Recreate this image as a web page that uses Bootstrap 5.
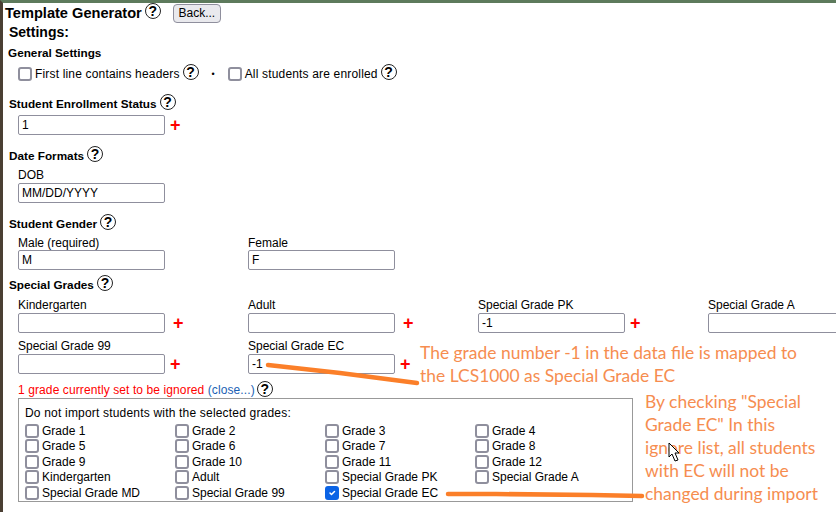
<!DOCTYPE html>
<html lang="en">
<head>
<meta charset="utf-8">
<title>Template Generator</title>
<link href="https://cdn.jsdelivr.net/npm/bootstrap@5.3.0/dist/css/bootstrap.min.css" rel="stylesheet">
<style>
html, body { height: 100%; }
body { margin: 0; background: #fff; color: #000; font-family: "Liberation Sans", Arial, sans-serif; font-size: 12px; line-height: 16px; overflow: hidden; }
.shot { position: relative; width: 836px; height: 512px; overflow: hidden; border-top: 3px solid #5d7a5c; border-left: 3px solid #4a3f33; }
.title-row { height: 20px; margin-left: 2px; }
.title-txt { font-size: 14.6px; font-weight: 700; }
.back-btn { width: 48px; height: 19px; margin-left: 12px; padding: 0; font-size: 12px; line-height: 16px; color: #000; background: #e9e9ed; border: 1px solid #8f8f9d; border-radius: 4px; font-family: "Liberation Sans", sans-serif; }
.set-head { margin: 1px 0 0 6px; height: 16px; font-size: 14px; font-weight: 700; }
.sec-head { height: 16px; margin-left: 6px; font-size: 11.75px; font-weight: 700; }
.sec-a { margin-top: 5px; margin-left: 5px; }
.sec-b { margin-top: 14px; }
.sec-c { margin-top: 13px; }
.sec-d { margin-top: 7px; }
.help { display: inline-flex; align-items: center; justify-content: center; width: 16px; height: 16px; margin: 0 0 4px 3px; border: 1px solid #222; border-radius: 50%; background: #fff; font-size: 14px; line-height: 1; font-weight: 700; flex: none; }
.chk-row { height: 16px; margin: 5px 0 0 15px; letter-spacing: .17px; }
.box13 { width: 14px; height: 14px; margin: 0 3px 0 0; border: 2px solid #8f8f9d; border-radius: 2px; flex: none; }
.box13:checked { background-color: #0b63e5; border-color: #0b63e5; }
.sep { width: 29px; text-align: center; font-size: 9px; }
.fld-rows { margin-left: 15px; }
.fld { width: 230px; flex: none; }
.fld-lab { height: 16px; padding-top: 1px; }
.fld-in { width: 147px; height: 20px; padding: 0 3px; font-size: 12px; line-height: 18px; color: #000; border: 1px solid #8f8f9d; border-radius: 2px; background: #fff; font-family: "Liberation Sans", sans-serif; min-height: 0; }
.req { width: 10px; margin-left: 5px; color: #f00; font-size: 18px; font-weight: 700; line-height: 20px; text-align: center; }
.req-w { margin-left: 8px; }
.gap-lab { margin-top: 3px; }
.top-gap2 { margin-top: 2px; }
.top-gap1 { margin-top: 1px; }
.row-gap4 { margin-top: 4px; }
.ign-line { height: 14px; margin: 9px 0 0 15px; letter-spacing: .1px; }
.ign-red { color: #f00; }
.ign-link { color: #1a5fb4; }
.ign-line .help { margin-top: 0; margin-bottom: 3px; margin-left: 2px; }
.ign-box { width: 615px; height: 104px; margin: 1px 0 0 15px; padding: 6px 0 0 6px; border: 1px solid #999; }
.ign-cap { height: 16px; margin-bottom: 2px; letter-spacing: .19px; }
.ign-grid { display: grid; grid-template-columns: repeat(4, 150px); grid-auto-rows: 15.5px; }
.ign-cell { display: flex; align-items: center; }
.note { position: absolute; color: #f68d50; font-family: Lato, "Open Sans", sans-serif; font-size: 17.45px; line-height: 23px; white-space: nowrap; }
.note-a { left: 417px; top: 338px; }
.note-b { left: 642px; top: 387px; }
.ink { position: absolute; left: -3px; top: -3px; pointer-events: none; }
</style>
</head>
<body>
<div class="shot">
  <div class="title-row d-flex align-items-center">
    <span class="title-txt">Template Generator</span><span class="help">?</span>
    <button type="button" class="back-btn">Back...</button>
  </div>
  <div class="set-head">Settings:</div>
  <div class="sec-head sec-a">General Settings</div>
  <div class="chk-row d-flex align-items-center">
    <input class="form-check-input box13 mt-0" type="checkbox"><span>First line contains headers</span><span class="help">?</span>
    <span class="sep">•</span>
    <input class="form-check-input box13 mt-0" type="checkbox"><span>All students are enrolled</span><span class="help">?</span>
  </div>
  <div class="sec-head sec-b d-flex align-items-center">Student Enrollment Status<span class="help">?</span></div>
  <div class="fld-rows d-flex gap-lab">
    <input class="fld-in form-control" type="text" value="1"><span class="req">+</span>
  </div>
  <div class="sec-head sec-c d-flex align-items-center">Date Formats<span class="help">?</span></div>
  <div class="fld-rows top-gap2">
    <div class="fld"><div class="fld-lab">DOB</div><input class="fld-in form-control top-gap1" type="text" value="MM/DD/YYYY"></div>
  </div>
  <div class="sec-head sec-c d-flex align-items-center">Student Gender<span class="help">?</span></div>
  <div class="fld-rows d-flex top-gap2">
    <div class="fld"><div class="fld-lab">Male (required)</div><input class="fld-in form-control" type="text" value="M"></div>
    <div class="fld"><div class="fld-lab">Female</div><input class="fld-in form-control" type="text" value="F"></div>
  </div>
  <div class="sec-head sec-d d-flex align-items-center">Special Grades<span class="help">?</span></div>
  <div class="fld-rows d-flex gap-lab flex-nowrap">
    <div class="fld"><div class="fld-lab">Kindergarten</div><div class="d-flex top-gap1"><input class="fld-in form-control" type="text"><span class="req req-w">+</span></div></div>
    <div class="fld"><div class="fld-lab">Adult</div><div class="d-flex top-gap1"><input class="fld-in form-control" type="text"><span class="req req-w">+</span></div></div>
    <div class="fld"><div class="fld-lab">Special Grade PK</div><div class="d-flex top-gap1"><input class="fld-in form-control" type="text" value="-1"><span class="req">+</span></div></div>
    <div class="fld"><div class="fld-lab">Special Grade A</div><div class="d-flex top-gap1"><input class="fld-in form-control" type="text"></div></div>
  </div>
  <div class="fld-rows d-flex row-gap4">
    <div class="fld"><div class="fld-lab">Special Grade 99</div><div class="d-flex top-gap1"><input class="fld-in form-control" type="text"><span class="req">+</span></div></div>
    <div class="fld"><div class="fld-lab">Special Grade EC</div><div class="d-flex top-gap1"><input class="fld-in form-control" type="text" value="-1"><span class="req">+</span></div></div>
  </div>
  <div class="ign-line d-flex align-items-center"><span class="ign-red">1 grade currently set to be ignored</span>&nbsp;<span class="ign-link">(close...)</span><span class="help">?</span></div>
  <div class="ign-box">
    <div class="ign-cap">Do not import students with the selected grades:</div>
    <div class="ign-grid">
      <label class="ign-cell"><input class="form-check-input box13 mt-0" type="checkbox">Grade 1</label>
      <label class="ign-cell"><input class="form-check-input box13 mt-0" type="checkbox">Grade 2</label>
      <label class="ign-cell"><input class="form-check-input box13 mt-0" type="checkbox">Grade 3</label>
      <label class="ign-cell"><input class="form-check-input box13 mt-0" type="checkbox">Grade 4</label>
      <label class="ign-cell"><input class="form-check-input box13 mt-0" type="checkbox">Grade 5</label>
      <label class="ign-cell"><input class="form-check-input box13 mt-0" type="checkbox">Grade 6</label>
      <label class="ign-cell"><input class="form-check-input box13 mt-0" type="checkbox">Grade 7</label>
      <label class="ign-cell"><input class="form-check-input box13 mt-0" type="checkbox">Grade 8</label>
      <label class="ign-cell"><input class="form-check-input box13 mt-0" type="checkbox">Grade 9</label>
      <label class="ign-cell"><input class="form-check-input box13 mt-0" type="checkbox">Grade 10</label>
      <label class="ign-cell"><input class="form-check-input box13 mt-0" type="checkbox">Grade 11</label>
      <label class="ign-cell"><input class="form-check-input box13 mt-0" type="checkbox">Grade 12</label>
      <label class="ign-cell"><input class="form-check-input box13 mt-0" type="checkbox">Kindergarten</label>
      <label class="ign-cell"><input class="form-check-input box13 mt-0" type="checkbox">Adult</label>
      <label class="ign-cell"><input class="form-check-input box13 mt-0" type="checkbox">Special Grade PK</label>
      <label class="ign-cell"><input class="form-check-input box13 mt-0" type="checkbox">Special Grade A</label>
      <label class="ign-cell"><input class="form-check-input box13 mt-0" type="checkbox">Special Grade MD</label>
      <label class="ign-cell"><input class="form-check-input box13 mt-0" type="checkbox">Special Grade 99</label>
      <label class="ign-cell"><input class="form-check-input box13 mt-0" type="checkbox" checked>Special Grade EC</label>
    </div>
  </div>

  <div class="note note-a">The grade number -1 in the data file is mapped to<br>the LCS1000 as Special Grade EC</div>
  <div class="note note-b">By checking "Special<br>Grade EC" In this<br>ignore list, all students<br>with EC will not be<br>changed during import</div>
  <svg class="ink" width="836" height="512" viewBox="0 0 836 512" aria-hidden="true">
    <path d="M268 365 L340 373 L417 383" fill="none" stroke="#fb7f29" stroke-width="4.5" stroke-linecap="round"/>
    <path d="M448 494 L496 494 L592 495 L642 496" fill="none" stroke="#fb7f29" stroke-width="4.5" stroke-linecap="round"/>
    <path d="M669 443 L669 457 L672 454 L675 461 L678 460 L675 453 L679 453 Z" fill="#fff" stroke="#000" stroke-width="1"/>
  </svg>
</div>
<script src="https://cdn.jsdelivr.net/npm/bootstrap@5.3.0/dist/js/bootstrap.bundle.min.js"></script>
</body>
</html>
